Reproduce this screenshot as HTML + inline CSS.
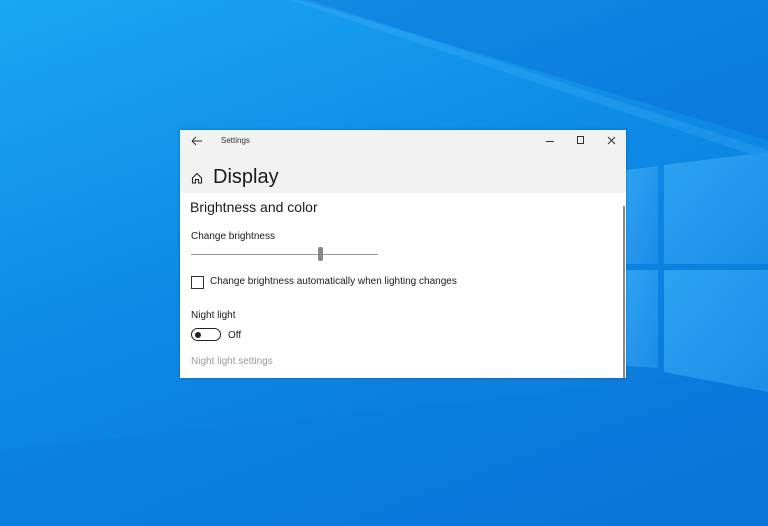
<!DOCTYPE html>
<html><head><style>
*{margin:0;padding:0;box-sizing:border-box}
body{width:768px;height:526px;overflow:hidden;position:relative;font-family:"Segoe UI","Liberation Sans",sans-serif;
background:linear-gradient(160deg,#1aa6f0 0%,#0d8ae6 45%,#0a72d6 100%);}
.bg{position:absolute;left:0;top:0}
.win{position:absolute;left:180px;top:130px;width:446px;height:248px;background:#fff;box-shadow:0 0 3px rgba(0,0,0,.25)}
.hdr{position:absolute;left:0;top:0;width:446px;height:63px;background:#f2f2f2}
.t{position:absolute;white-space:nowrap;color:#1a1a1a}
</style></head><body>
<svg class="bg" width="768" height="526">
<defs>
<linearGradient id="p" x1="0" y1="0" x2="1" y2="1"><stop offset="0" stop-color="#2ea2f2"/><stop offset="1" stop-color="#1c8de8"/></linearGradient></defs>
<polygon points="300,0 768,0 768,140" fill="#0a5ccc" opacity=".3"/>
<polygon points="290,0 310,0 768,150 768,160" fill="#5cc0ff" opacity=".2"/>
<polygon points="0,450 768,370 768,526 0,526" fill="#0a7ae0" opacity=".2"/>
<polygon points="626,170 658,166 658,264 626,264" fill="url(#p)"/>
<polygon points="664,165 768,152 768,264 664,264" fill="url(#p)"/>
<polygon points="626,270 658,270 658,368 626,366" fill="url(#p)"/>
<polygon points="664,270 768,270 768,392 664,372" fill="url(#p)"/>
</svg>
<div class="win">
<div class="hdr"></div>
<svg style="position:absolute;left:11px;top:6px" width="12" height="10"><path d="M1 5H11M1 5L5 1M1 5L5 9" stroke="#333" stroke-width="1" fill="none"/></svg>
<div class="t" style="left:41px;top:6px;font-size:8px;color:#333">Settings</div>
<div style="position:absolute;left:366px;top:11px;width:8px;height:1px;background:#333"></div>
<div style="position:absolute;left:397px;top:6px;width:7px;height:8px;border:1px solid #333"></div>
<svg style="position:absolute;left:427px;top:6px" width="9" height="9"><path d="M1 1L8 8M8 1L1 8" stroke="#333" stroke-width="1"/></svg>
<svg style="position:absolute;left:11px;top:42px" width="12" height="12"><path d="M1.5 6L6 1.5L10.5 6V11H7.5V7.5H4.5V11H1.5Z" stroke="#222" stroke-width="1.1" fill="none"/></svg>
<div class="t" style="left:33px;top:36px;font-size:20px">Display</div>
<div class="t" style="left:10px;top:69px;font-size:14px">Brightness and color</div>
<div class="t" style="left:11px;top:101px;font-size:10px">Change brightness</div>
<div style="position:absolute;left:11px;top:124px;width:187px;height:1px;background:#999"></div>
<div style="position:absolute;left:138px;top:117px;width:5px;height:14px;border-radius:2px;background:#888"></div>
<div style="position:absolute;left:11px;top:146px;width:13px;height:13px;border:1px solid #333"></div>
<div class="t" style="left:30px;top:146px;font-size:10px">Change brightness automatically when lighting changes</div>
<div class="t" style="left:11px;top:180px;font-size:10px">Night light</div>
<div style="position:absolute;left:11px;top:198px;width:30px;height:13px;border:1.5px solid #222;border-radius:7px"></div>
<div style="position:absolute;left:15px;top:202px;width:6px;height:6px;border-radius:3px;background:#222"></div>
<div class="t" style="left:48px;top:200px;font-size:10px">Off</div>
<div class="t" style="left:11px;top:226px;font-size:10px;color:#9a9a9a">Night light settings</div>
<div style="position:absolute;left:443px;top:76px;width:2px;height:172px;background:#888"></div>
</div>
</body></html>
